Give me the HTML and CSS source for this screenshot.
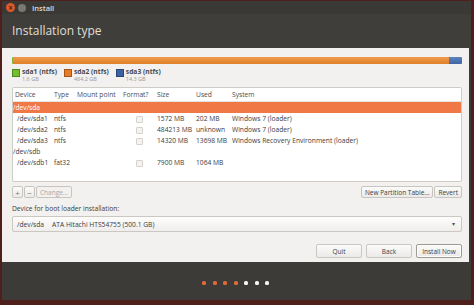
FILE: index.html
```html
<!DOCTYPE html>
<html lang="en">
<head>
  <meta charset="UTF-8">
  <title>Install</title>
  <link rel="stylesheet" href="styles.css">
</head>
<body>

  <div class="window">
    <div class="titlebar">
      <span class="btn-close">&times;</span>
      <span class="btn-min"></span>
      <span class="title">Install</span>
    </div>

    <div class="header">Installation type</div>

    <div class="panel">
      <div class="disk-bar">
        <span class="seg seg-sda1" style="flex-grow: 1.6"></span>
        <span class="seg seg-sda2" style="flex-grow: 484.2"></span>
        <span class="seg seg-sda3" style="flex-grow: 14.3"></span>
      </div>

      <div class="legend">
        <div class="legend-item">
          <span class="swatch swatch-sda1"></span>
          <div>
            <div class="legend-name">sda1 (ntfs)</div>
            <div class="legend-size">1.6 GB</div>
          </div>
        </div>
        <div class="legend-item">
          <span class="swatch swatch-sda2"></span>
          <div>
            <div class="legend-name">sda2 (ntfs)</div>
            <div class="legend-size">484.2 GB</div>
          </div>
        </div>
        <div class="legend-item">
          <span class="swatch swatch-sda3"></span>
          <div>
            <div class="legend-name">sda3 (ntfs)</div>
            <div class="legend-size">14.3 GB</div>
          </div>
        </div>
      </div>

      <div class="table-box">
        <table class="parts">
          <colgroup>
            <col style="width: 39px">
            <col style="width: 23px">
            <col style="width: 46px">
            <col style="width: 34px">
            <col style="width: 39px">
            <col style="width: 36px">
            <col>
          </colgroup>
          <thead>
            <tr>
              <th>Device</th><th>Type</th><th>Mount point</th><th>Format?</th><th>Size</th><th>Used</th><th>System</th>
            </tr>
          </thead>
          <tbody>
            <tr class="selected">
              <td class="disk">/dev/sda</td><td></td><td></td><td></td><td></td><td></td><td></td>
            </tr>
            <tr>
              <td class="part">/dev/sda1</td><td>ntfs</td><td></td><td class="fmt"><span class="check"></span></td><td>1572 MB</td><td>202 MB</td><td>Windows 7 (loader)</td>
            </tr>
            <tr>
              <td class="part">/dev/sda2</td><td>ntfs</td><td></td><td class="fmt"><span class="check"></span></td><td>484213 MB</td><td>unknown</td><td>Windows 7 (loader)</td>
            </tr>
            <tr>
              <td class="part">/dev/sda3</td><td>ntfs</td><td></td><td class="fmt"><span class="check"></span></td><td>14320 MB</td><td>13698 MB</td><td>Windows Recovery Environment (loader)</td>
            </tr>
            <tr>
              <td class="disk">/dev/sdb</td><td></td><td></td><td></td><td></td><td></td><td></td>
            </tr>
            <tr>
              <td class="part">/dev/sdb1</td><td>fat32</td><td></td><td class="fmt"><span class="check"></span></td><td>7900 MB</td><td>1064 MB</td><td></td>
            </tr>
          </tbody>
        </table>
      </div>

      <div class="table-tools">
        <div class="tool-group">
          <button class="small-btn sq">+</button>
          <button class="small-btn sq">&minus;</button>
          <button class="small-btn" disabled>Change...</button>
        </div>
        <div class="tool-group">
          <button class="small-btn">New Partition Table...</button>
          <button class="small-btn">Revert</button>
        </div>
      </div>

      <div class="boot-label">Device for boot loader installation:</div>
      <div class="combo">
        <span class="combo-dev">/dev/sda</span>
        <span class="combo-name">ATA Hitachi HTS54755 (500.1 GB)</span>
        <span class="combo-arrow">&#9662;</span>
      </div>

      <div class="actions">
        <button class="action-btn">Quit</button>
        <button class="action-btn">Back</button>
        <button class="action-btn default">Install Now</button>
      </div>
    </div>

    <div class="footer">
      <span class="dot done"></span>
      <span class="dot done"></span>
      <span class="dot done"></span>
      <span class="dot done"></span>
      <span class="dot"></span>
      <span class="dot"></span>
      <span class="dot"></span>
    </div>
  </div>

</body>
</html>
```

FILE: styles.css
```css
body {
  margin: 0;
  height: 305px;
  background: #4f1f1c;
  font-family: "Open Sans", "Noto Sans", sans-serif;
  overflow: hidden;
}

.window {
  margin: 1px 3px 0 2px;
  background: #3c3b37;
}

.titlebar {
  height: 13px;
  display: flex;
  align-items: center;
  padding-left: 4px;
  background: #3a3935;
}

.btn-close {
  width: 9px;
  height: 9px;
  border-radius: 50%;
  background: #e0592a;
  color: #3c2a22;
  font-size: 8px;
  line-height: 9px;
  text-align: center;
  font-weight: bold;
}

.btn-min {
  width: 8px;
  height: 8px;
  border-radius: 50%;
  background: #7a7873;
  margin-left: 3px;
}

.title {
  margin-left: 6px;
  color: #dfdbd2;
  font-size: 7.5px;
  font-weight: 600;
}

.header {
  height: 34px;
  padding-left: 10px;
  color: #e2ded6;
  font-size: 12px;
  line-height: 33px;
  background: #3f3e3a;
}

.panel {
  height: 214px;
  box-sizing: border-box;
  margin-right: 2px;
  padding: 9px 7px 0 10px;
  background: #f2f1f0;
  color: #3c3c3c;
  font-size: 6.7px;
}

.disk-bar {
  display: flex;
  height: 7px;
  border-radius: 1px;
  overflow: hidden;
}

.seg-sda1 { background: #7ab43a; }
.seg-sda2 { background: linear-gradient(#ef9a4c, #e07f26); }
.seg-sda3 { background: linear-gradient(#5d83bd, #3f66a3); }

.legend {
  display: flex;
  gap: 7px;
  margin-top: 4px;
  height: 19px;
}

.legend-item {
  display: flex;
  gap: 2px;
}

.swatch {
  width: 6px;
  height: 6px;
  margin-top: 1px;
  border: 0.5px solid rgba(0, 0, 0, 0.3);
}

.swatch-sda1 { background: #73c02a; }
.swatch-sda2 { background: #e97b25; }
.swatch-sda3 { background: #3b63a3; }

.legend-name {
  font-weight: bold;
  color: #4a4a4a;
  line-height: 8px;
}

.legend-size {
  font-size: 5.5px;
  color: #9a9894;
  line-height: 7px;
}

.table-box {
  height: 93px;
  background: #fff;
  border: 1px solid #cfccc7;
  border-radius: 2px;
}

.parts {
  width: 100%;
  border-collapse: collapse;
  table-layout: fixed;
}

.parts th {
  height: 13px;
  padding: 0 0 0 2px;
  text-align: left;
  font-weight: normal;
  color: #4c4c4c;
  border-bottom: 1px solid #e6e4e1;
}

.parts td {
  height: 11px;
  padding: 0 0 0 2px;
  white-space: nowrap;
  overflow: hidden;
}

.parts .disk {
  padding-left: 0;
}

.parts .part {
  padding-left: 4px;
}

.parts .selected td {
  background: #f07746;
  color: #fff;
}

.parts .fmt {
  text-align: center;
}

.check {
  display: inline-block;
  width: 5px;
  height: 5px;
  border: 1px solid #d6d3cf;
  border-radius: 1px;
  background: #f4f3f1;
  vertical-align: middle;
}

.table-tools {
  display: flex;
  justify-content: space-between;
  margin-top: 4px;
}

.tool-group {
  display: flex;
  gap: 1px;
}

.small-btn {
  height: 12px;
  padding: 0 3px;
  font-family: inherit;
  font-size: 6.5px;
  color: #3c3c3c;
  background: linear-gradient(#fbfbfa, #ebeae8);
  border: 1px solid #c8c5c0;
  border-radius: 2px;
}

.small-btn.sq {
  width: 11px;
  padding: 0;
  font-size: 8px;
  color: #777;
}

.small-btn:disabled {
  color: #a9a7a3;
  background: #f2f1f0;
}

.boot-label {
  margin-top: 5px;
  height: 11px;
  line-height: 11px;
}

.combo {
  display: flex;
  align-items: center;
  height: 16px;
  box-sizing: border-box;
  margin-top: 2px;
  padding: 0 6px 0 4px;
  background: linear-gradient(#fdfdfc, #efeeec);
  border: 1px solid #cbc8c3;
  border-radius: 2px;
}

.combo-dev {
  width: 35px;
}

.combo-name {
  flex: 1;
}

.combo-arrow {
  font-size: 6px;
  color: #555;
}

.actions {
  display: flex;
  justify-content: flex-end;
  gap: 4px;
  margin-top: 12px;
}

.action-btn {
  width: 46px;
  height: 14px;
  padding: 0;
  font-family: inherit;
  font-size: 6.5px;
  color: #3c3c3c;
  background: linear-gradient(#fbfbfa, #ebeae8);
  border: 1px solid #cac7c2;
  border-radius: 2px;
}

.action-btn.default {
  border-color: #9d9a95;
  box-shadow: inset 0 0 0 1px #fdfdfc;
}

.footer {
  height: 38px;
  margin-right: 2px;
  display: flex;
  align-items: center;
  justify-content: center;
  gap: 6.5px;
  padding-top: 4px;
  box-sizing: border-box;
  background: #3c3b37;
}

.dot {
  width: 4px;
  height: 4px;
  border-radius: 1.5px;
  background: #f5f4f2;
}

.dot.done {
  background: #dd6a38;
}
```
